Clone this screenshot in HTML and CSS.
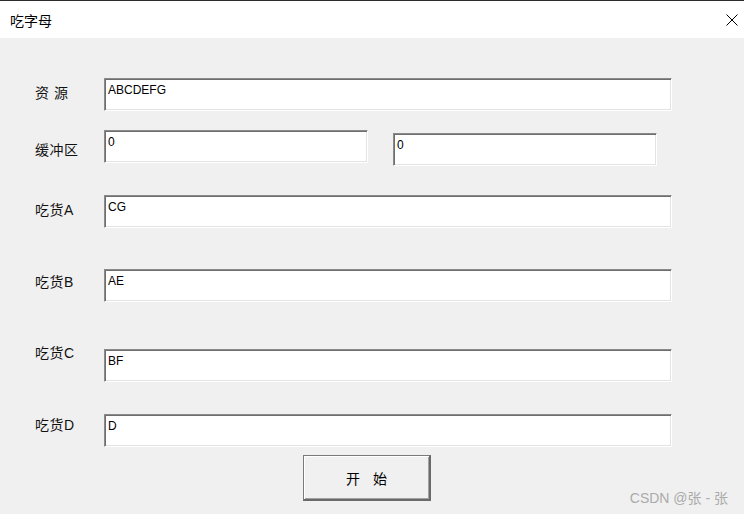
FILE: index.html
```html
<!DOCTYPE html>
<html lang="zh-CN">
<head>
<meta charset="utf-8">
<title>吃字母</title>
<link rel="stylesheet" href="styles.css">
</head>
<body>
<div class="window">
  <div class="titlebar">
    <span class="title">吃字母</span>
    <svg class="close" width="12" height="12" viewBox="0 0 12 12"><path d="M0.5 0.5 L11.5 11.5 M11.5 0.5 L0.5 11.5" stroke="#000" stroke-width="1" fill="none"/></svg>
  </div>
  <div class="content">
    <div class="row r1">
      <span class="label">资 源</span>
      <div class="field">ABCDEFG</div>
    </div>
    <div class="row r2">
      <span class="label">缓冲区</span>
      <div class="field half">0</div>
      <div class="field half second">0</div>
    </div>
    <div class="row r3">
      <span class="label">吃货A</span>
      <div class="field">CG</div>
    </div>
    <div class="row r4">
      <span class="label">吃货B</span>
      <div class="field">AE</div>
    </div>
    <div class="row r5">
      <span class="label">吃货C</span>
      <div class="field">BF</div>
    </div>
    <div class="row r6">
      <span class="label">吃货D</span>
      <div class="field">D</div>
    </div>
    <div class="row r7">
      <button class="btn">开 始</button>
    </div>
  </div>
  <div class="watermark">CSDN @张 - 张</div>
</div>
</body>
</html>
```

FILE: styles.css
```css
html, body {
  margin: 0;
  padding: 0;
}
body {
  background: #f0f0f0;
  font-family: "Liberation Sans", "Noto Sans CJK SC", sans-serif;
}
.window {
  position: relative;
  width: 744px;
  height: 514px;
  overflow: hidden;
  background: #f0f0f0;
}
.titlebar {
  height: 37px;
  border-top: 1px solid #2b2b2b;
  background: #ffffff;
  display: flex;
  align-items: center;
  justify-content: space-between;
  padding: 0 6px 0 10px;
}
.title {
  font-size: 14px;
  line-height: 16px;
  color: #000;
  font-family: "Noto Sans CJK SC", sans-serif;
}
.close {
  display: block;
  margin-top: 1px;
}
.content {
  padding: 40px 0 0 35px;
}
.row {
  display: flex;
  align-items: flex-start;
}
.label {
  width: 69px;
  flex: none;
  font-size: 14px;
  line-height: 16px;
  color: #111;
  letter-spacing: 0.5px;
  font-family: "Liberation Sans", "Noto Sans CJK SC", sans-serif;
}
.field {
  box-sizing: border-box;
  width: 568px;
  height: 33px;
  flex: none;
  background: #ffffff;
  border-top: 1px solid #8a8a8a;
  border-left: 1px solid #8a8a8a;
  border-right: 1px solid #ffffff;
  border-bottom: 1px solid #ffffff;
  box-shadow: inset 1px 1px 0 #6e6e6e, inset -1px -1px 0 #e3e3e3;
  padding: 4px 2px 0 3px;
  font-size: 12px;
  line-height: 14px;
  color: #000;
}
.field.half {
  width: 264px;
}
.field.second {
  margin-left: 25px;
  margin-top: 3px;
}
.r1 { margin-top: 0; }
.r1 .label { margin-top: 7px; }
.r2 { margin-top: 19px; }
.r2 .label { margin-top: 12px; }
.r3 { margin-top: 29px; }
.r3 .label { margin-top: 7px; }
.r4 { margin-top: 41px; }
.r4 .label { margin-top: 5px; }
.r5 { margin-top: 43px; }
.r5 .label { margin-top: 0; }
.r5 .field { margin-top: 4px; }
.r6 { margin-top: 32px; }
.r6 .label { margin-top: 3px; }
.r7 { margin-top: 8px; }
.btn {
  margin-left: 268px;
  width: 128px;
  height: 46px;
  box-sizing: border-box;
  background: #f0f0f0;
  border-top: 1px solid #7a7a7a;
  border-left: 1px solid #7a7a7a;
  border-right: 2px solid #6a6a6a;
  border-bottom: 2px solid #6a6a6a;
  box-shadow: inset 1px 1px 0 #ffffff, inset -1px -1px 0 #a0a0a0;
  font-family: "Noto Sans CJK SC", sans-serif;
  font-size: 14px;
  line-height: 16px;
  word-spacing: 10px;
  color: #000;
  padding: 0 0 0 0;
}
.watermark {
  position: absolute;
  right: 16px;
  bottom: 8px;
  font-size: 14px;
  line-height: 16px;
  color: #ababab;
  font-family: "Liberation Sans", "Noto Sans CJK SC", sans-serif;
}
```
